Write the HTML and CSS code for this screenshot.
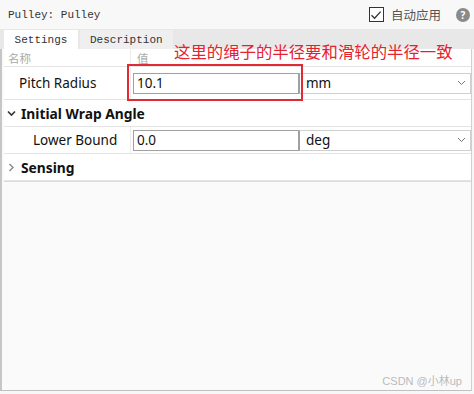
FILE: index.html
```html
<!DOCTYPE html>
<html lang="zh">
<head>
    <meta charset="UTF-8">
    <meta name="viewport" content="width=device-width, initial-scale=1.0">
    <title>Pulley: Pulley</title>
    <link rel="stylesheet" href="styles.css">
</head>
<body>
    <div class="window">
        <div class="titlebar">
            <span class="title">Pulley: Pulley</span>
            <div class="auto-apply">
                <span class="checkbox">
                    <svg width="12" height="12" viewBox="0 0 12 12"><path d="M1.5 6.2 L4.6 9.2 L10.6 2.6" fill="none" stroke="#333" stroke-width="1.3"/></svg>
                </span>
                <span class="auto-label">自动应用</span>
                <span class="help">?</span>
            </div>
        </div>

        <div class="tabs">
            <div class="tab active">Settings</div>
            <div class="tab">Description</div>
        </div>

        <div class="content">
            <div class="grid">
                <div class="cell head">名称</div>
                <div class="cell head value-head">值</div>

                <div class="cell label row-tall">Pitch Radius</div>
                <div class="cell value row-tall">
                    <div class="input">10.1</div>
                    <div class="select">mm
                        <svg class="drop" width="9" height="6" viewBox="0 0 9 6"><path d="M1 1 L4.5 4.5 L8 1" fill="none" stroke="#777" stroke-width="1"/></svg>
                    </div>
                </div>

                <div class="cell group">
                    <svg class="chev" width="9" height="9" viewBox="0 0 9 9"><path d="M1 2.5 L4.5 6 L8 2.5" fill="none" stroke="#333" stroke-width="1.6"/></svg>
                    Initial Wrap Angle
                </div>

                <div class="cell label sub">Lower Bound</div>
                <div class="cell value">
                    <div class="input">0.0</div>
                    <div class="select">deg
                        <svg class="drop" width="9" height="6" viewBox="0 0 9 6"><path d="M1 1 L4.5 4.5 L8 1" fill="none" stroke="#777" stroke-width="1"/></svg>
                    </div>
                </div>

                <div class="cell group">
                    <svg class="chev" width="9" height="9" viewBox="0 0 9 9"><path d="M2.5 1 L6 4.5 L2.5 8" fill="none" stroke="#888" stroke-width="1.4"/></svg>
                    Sensing
                </div>
            </div>
            <span class="watermark">CSDN @小林up</span>
        </div>

        <!-- annotation drawn over the screenshot -->
        <div class="note">这里的绳子的半径要和滑轮的半径一致</div>
        <div class="note-box"></div>
    </div>
</body>
</html>
```

FILE: styles.css
```css
body {
    margin: 0;
    background: #ffffff;
    font-family: "Noto Sans", "Noto Sans CJK SC", sans-serif;
}
.window {
    position: relative;
    width: 474px;
    height: 394px;
    display: flex;
    flex-direction: column;
    background: #f7f7f7;
}
.titlebar {
    height: 29px;
    display: flex;
    align-items: center;
    justify-content: space-between;
    padding: 0 4px 0 8px;
    background: #f8f8f8;
}
.title {
    font-family: "Liberation Mono", monospace;
    font-size: 11px;
    color: #333;
}
.auto-apply {
    display: flex;
    align-items: center;
}
.checkbox {
    width: 13px;
    height: 13px;
    border: 1px solid #333;
    background: #fff;
    display: flex;
    align-items: center;
    justify-content: center;
}
.auto-label {
    margin-left: 7px;
    font-family: "Noto Sans CJK SC", sans-serif;
    font-size: 12.5px;
    color: #555;
}
.help {
    margin-left: 15px;
    width: 14px;
    height: 14px;
    border-radius: 50%;
    background: #8a8a8a;
    color: #fff;
    font-size: 10px;
    font-weight: bold;
    line-height: 14px;
    text-align: center;
}
.tabs {
    height: 20px;
    display: flex;
    align-items: flex-end;
    padding-left: 4px;
    gap: 2px;
    background: #e8e8e8;
}
.tab {
    height: 19px;
    padding: 0 10px;
    font-family: "Liberation Mono", monospace;
    font-size: 11px;
    line-height: 20px;
    color: #333;
    background: #efefef;
}
.tab.active {
    width: 74px;
    padding: 0;
    text-align: center;
    background: #ffffff;
}
.content {
    position: relative;
    flex: 1;
    margin: 0 2px 3px 0;
    border-left: 2px solid #c6c6c6;
    border-right: 1px solid #d0d0d0;
    border-bottom: 1px solid #c0c0c0;
    padding-left: 2px;
    background: #fafafa;
}
.grid {
    display: grid;
    grid-template-columns: 126px 1fr;
    background: #ffffff;
    border-bottom: 1px solid #dcdcdc;
}
.cell {
    display: flex;
    align-items: center;
    height: 26px;
    border-bottom: 1px solid #e4e4e4;
    font-size: 13.5px;
    color: #111;
}
.cell.head {
    height: 17px;
    padding-left: 4px;
    font-size: 11.5px;
    color: #aaa;
    font-family: "Noto Sans CJK SC", sans-serif;
}
.cell.value-head {
    border-left: 1px solid #ececec;
    padding-left: 6px;
}
.cell.row-tall {
    height: 32px;
}
.cell.label {
    padding-left: 15px;
}
.cell.label.sub {
    padding-left: 29px;
}
.cell.value {
    border-left: 1px solid #ececec;
    padding-left: 2px;
}
.input {
    width: 161px;
    height: 19px;
    border: 1px solid #a0a0a0;
    padding-left: 3px;
    line-height: 19px;
    background: #fff;
}
.select {
    flex: 1;
    height: 19px;
    display: flex;
    align-items: center;
    padding-left: 6px;
    border-left: 1px solid #a0a0a0;
    border-top: 1px solid #d0d0d0;
    border-bottom: 1px solid #d0d0d0;
    border-right: 1px solid #d0d0d0;
    line-height: 19px;
}
.drop {
    margin-left: auto;
    margin-right: 4px;
}
.cell.group {
    grid-column: 1 / 3;
    padding-left: 3px;
    gap: 5px;
    font-size: 13.8px;
    font-weight: bold;
    color: #111;
}
.watermark {
    position: absolute;
    right: 9px;
    bottom: 2px;
    font-family: "Liberation Sans", "Noto Sans CJK SC", sans-serif;
    font-size: 11px;
    color: #bbb;
}
.note {
    position: absolute;
    left: 174px;
    top: 40px;
    font-family: "Noto Sans CJK SC", sans-serif;
    font-size: 16.4px;
    line-height: 22px;
    color: #e62230;
}
.note-box {
    position: absolute;
    left: 127px;
    top: 64px;
    width: 172px;
    height: 33px;
    border: 2px solid #e02a36;
}
```
